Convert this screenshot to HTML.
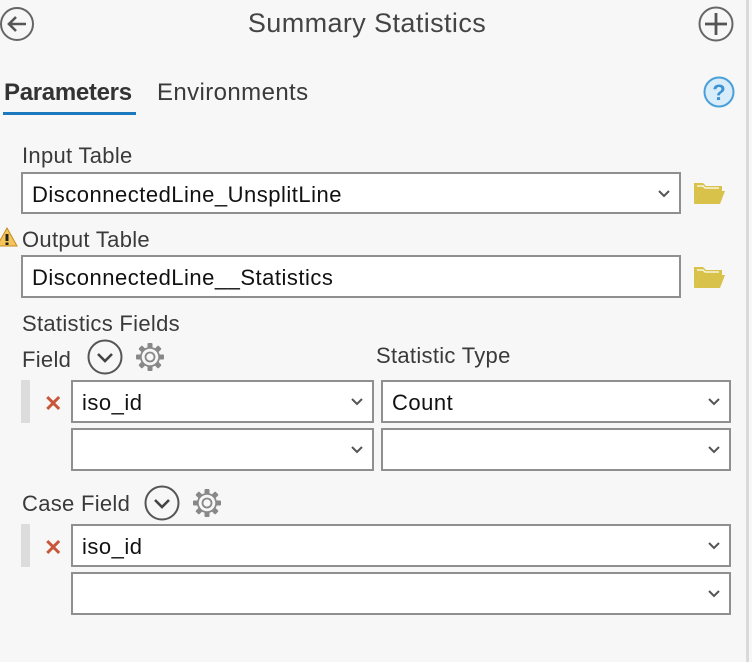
<!DOCTYPE html>
<html><head><meta charset="utf-8"><style>
*{margin:0;padding:0;box-sizing:border-box}
body{width:752px;height:662px;background:#f7f7f7;font-family:"Liberation Sans",sans-serif;position:relative;overflow:hidden;color:#333}
.a{position:absolute;white-space:nowrap}
.lbl{font-size:22px;color:#3a3a3a;line-height:24px;letter-spacing:0.3px}
.box{position:absolute;background:#fff;border:2px solid #8f8f8f;font-size:22px;color:#111;padding-left:9px;line-height:41px;letter-spacing:0.5px}
.chev{position:absolute;right:9px;top:16px}
.bar{position:absolute;background:#dcdcdc;width:9px}
.x{position:absolute;color:#c8573a;font-size:22px;font-weight:bold;line-height:22px}
</style></head><body>
<div style="position:absolute;left:746px;top:0;width:3px;height:662px;background:#dadada"></div>
<svg class="a" style="left:0;top:6px" width="36" height="36" viewBox="0 0 36 36"><circle cx="17" cy="18" r="16" fill="none" stroke="#666" stroke-width="2"/><path d="M26 18H9M16 11l-7 7 7 7" fill="none" stroke="#555" stroke-width="2.6"/></svg>
<div class="a" style="left:0;width:734px;text-align:center;top:8px;font-size:27px;color:#444;letter-spacing:0.4px">Summary Statistics</div>
<svg class="a" style="left:698px;top:6px" width="38" height="38" viewBox="0 0 38 38"><circle cx="18" cy="18" r="16.5" fill="none" stroke="#666" stroke-width="2"/><path d="M18 7v22M7 18h22" stroke="#555" stroke-width="2.8"/></svg>
<div class="a" style="left:4px;top:79px;font-size:24px;font-weight:bold;color:#333;letter-spacing:-0.3px">Parameters</div>
<div style="position:absolute;left:3px;top:112px;width:133px;height:3px;background:#1c79bd"></div>
<div class="a" style="left:157px;top:79px;font-size:24px;color:#3a3a3a;letter-spacing:0.4px">Environments</div>
<svg class="a" style="left:703px;top:76px" width="32" height="32" viewBox="0 0 32 32"><circle cx="16" cy="16" r="14.5" fill="#d8ecfa" stroke="#4a9fd8" stroke-width="2"/><text x="16" y="24" text-anchor="middle" font-size="22" font-weight="bold" fill="#3b93d3" font-family="Liberation Sans">?</text></svg>

<div class="a lbl" style="left:22px;top:144px">Input Table</div>
<div class="box" style="left:21px;top:172px;width:660px;height:42px">DisconnectedLine_UnsplitLine<svg class="chev" width="12" height="8"><path d="M1 1l5 5 5-5" fill="none" stroke="#555" stroke-width="2"/></svg></div>
<svg class="a" style="left:692px;top:179px" width="34" height="28" viewBox="0 0 34 28"><path d="M2 4h9l3 3h16v5H8L2 25z" fill="#d8c24a"/><path d="M2 25L8 12h25l-5 13z" fill="#d8c24a"/><path d="M5 7h6l2 2h14" stroke="#fff" stroke-width="1.2" fill="none"/></svg>

<svg class="a" style="left:0;top:226px" width="18" height="22" viewBox="0 0 18 22"><path d="M7 2L17 20H-3z" fill="#f5c55a" stroke="#c78a1c" stroke-width="1"/><rect x="5.5" y="8" width="3" height="7" fill="#222"/><rect x="5.5" y="16.5" width="3" height="2.5" fill="#222"/></svg>
<div class="a lbl" style="left:22px;top:228px">Output Table</div>
<div class="box" style="left:21px;top:255px;width:660px;height:43px">DisconnectedLine__Statistics</div>
<svg class="a" style="left:692px;top:263px" width="34" height="28" viewBox="0 0 34 28"><path d="M2 4h9l3 3h16v5H8L2 25z" fill="#d8c24a"/><path d="M2 25L8 12h25l-5 13z" fill="#d8c24a"/><path d="M5 7h6l2 2h14" stroke="#fff" stroke-width="1.2" fill="none"/></svg>

<div class="a lbl" style="left:22px;top:312px">Statistics Fields</div>
<div class="a lbl" style="left:22px;top:348px">Field</div>
<svg class="a" style="left:87px;top:339px" width="36" height="36" viewBox="0 0 36 36"><circle cx="18" cy="18" r="16.5" fill="none" stroke="#555" stroke-width="2"/><path d="M11 15l7 7 7-7" fill="none" stroke="#444" stroke-width="2.6"/></svg>
<svg class="a" style="left:135px;top:342px" width="30" height="30" viewBox="-15 -15 30 30"><g fill="#888"><rect x="-2.5" y="-14" width="5" height="28" rx="1"/><rect x="-2.5" y="-14" width="5" height="28" rx="1" transform="rotate(45)"/><rect x="-2.5" y="-14" width="5" height="28" rx="1" transform="rotate(90)"/><rect x="-2.5" y="-14" width="5" height="28" rx="1" transform="rotate(135)"/><circle r="10"/></g><circle r="8.3" fill="#f7f7f7"/><circle r="4.5" fill="none" stroke="#888" stroke-width="1.8"/></svg>
<div class="a lbl" style="left:376px;top:344px">Statistic Type</div>

<div class="bar" style="left:21px;top:380px;height:43px"></div>
<div class="x" style="left:44px;top:393px">✕</div>
<div class="box" style="left:71px;top:380px;width:303px;height:43px">iso_id<svg class="chev" width="12" height="8"><path d="M1 1l5 5 5-5" fill="none" stroke="#555" stroke-width="2"/></svg></div>
<div class="box" style="left:71px;top:428px;width:303px;height:43px"><svg class="chev" width="12" height="8"><path d="M1 1l5 5 5-5" fill="none" stroke="#555" stroke-width="2"/></svg></div>
<div class="box" style="left:381px;top:380px;width:350px;height:43px">Count<svg class="chev" width="12" height="8"><path d="M1 1l5 5 5-5" fill="none" stroke="#555" stroke-width="2"/></svg></div>
<div class="box" style="left:381px;top:428px;width:350px;height:43px"><svg class="chev" width="12" height="8"><path d="M1 1l5 5 5-5" fill="none" stroke="#555" stroke-width="2"/></svg></div>

<div class="a lbl" style="left:22px;top:492px">Case Field</div>
<svg class="a" style="left:144px;top:485px" width="36" height="36" viewBox="0 0 36 36"><circle cx="18" cy="18" r="16.5" fill="none" stroke="#555" stroke-width="2"/><path d="M11 15l7 7 7-7" fill="none" stroke="#444" stroke-width="2.6"/></svg>
<svg class="a" style="left:192px;top:488px" width="30" height="30" viewBox="-15 -15 30 30"><g fill="#888"><rect x="-2.5" y="-14" width="5" height="28" rx="1"/><rect x="-2.5" y="-14" width="5" height="28" rx="1" transform="rotate(45)"/><rect x="-2.5" y="-14" width="5" height="28" rx="1" transform="rotate(90)"/><rect x="-2.5" y="-14" width="5" height="28" rx="1" transform="rotate(135)"/><circle r="10"/></g><circle r="8.3" fill="#f7f7f7"/><circle r="4.5" fill="none" stroke="#888" stroke-width="1.8"/></svg>

<div class="bar" style="left:21px;top:524px;height:43px"></div>
<div class="x" style="left:44px;top:537px">✕</div>
<div class="box" style="left:71px;top:524px;width:660px;height:43px">iso_id<svg class="chev" width="12" height="8"><path d="M1 1l5 5 5-5" fill="none" stroke="#555" stroke-width="2"/></svg></div>
<div class="box" style="left:71px;top:572px;width:660px;height:43px"><svg class="chev" width="12" height="8"><path d="M1 1l5 5 5-5" fill="none" stroke="#555" stroke-width="2"/></svg></div>
</body></html>
